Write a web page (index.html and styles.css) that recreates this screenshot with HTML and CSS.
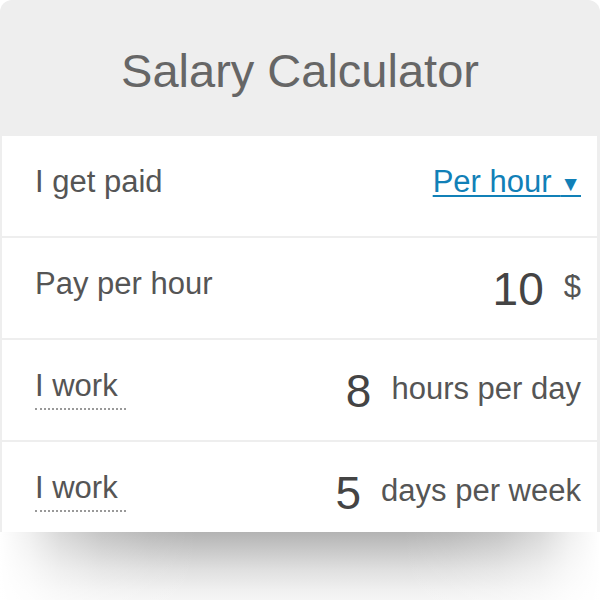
FILE: index.html
```html
<!DOCTYPE html>
<html lang="en">
<head>
    <meta charset="UTF-8">
    <meta name="viewport" content="width=device-width, initial-scale=1.0">
    <title>Salary Calculator</title>
    <link rel="stylesheet" href="styles.css">
</head>
<body>

<div class="widget">
    <div class="calculator">
        <!-- Header -->
        <div class="calculator-header">
            <h1>Salary Calculator</h1>
        </div>

        <!-- Input rows -->
        <div class="calculator-rows">
            <div class="row">
                <span class="label">I get paid</span>
                <span class="select">Per hour&nbsp;<span class="caret">▼</span></span>
            </div>
            <div class="row">
                <span class="label">Pay per hour</span>
                <span class="field">
                    <span class="value">10</span>
                    <span class="unit">$</span>
                </span>
            </div>
            <div class="row">
                <span class="label"><span class="hint">I work</span></span>
                <span class="field">
                    <span class="value">8</span>
                    <span class="unit">hours per day</span>
                </span>
            </div>
            <div class="row">
                <span class="label"><span class="hint">I work</span></span>
                <span class="field">
                    <span class="value">5</span>
                    <span class="unit">days per week</span>
                </span>
            </div>
        </div>
    </div>
    <div class="widget-shadow"></div>
</div>

</body>
</html>
```

FILE: styles.css
```css
body {
    font-family: "Liberation Sans", Arial, sans-serif;
    margin: 0;
    padding: 0;
    background-color: #fff;
}

.calculator {
    height: 532px;
    overflow: hidden;
    background-color: #eee;
    border-radius: 12px 12px 0 0;
}

/* Soft shadow under the card */
.widget-shadow {
    height: 68px;
    background:
        linear-gradient(to right, #fff, rgba(255, 255, 255, 0.8) 5%, rgba(255, 255, 255, 0.5) 10%, rgba(255, 255, 255, 0.23) 17%, rgba(255, 255, 255, 0.08) 25%, rgba(255, 255, 255, 0) 33%, rgba(255, 255, 255, 0) 67%, rgba(255, 255, 255, 0.08) 75%, rgba(255, 255, 255, 0.23) 83%, rgba(255, 255, 255, 0.5) 90%, rgba(255, 255, 255, 0.8) 95%, #fff),
        linear-gradient(#b3b3b3, #c9c9c9 27%, #e0e0e0 56%, #f0f0f0 85%, #f5f5f5);
}

.calculator-header {
    height: 136px;
    box-sizing: border-box;
    padding-top: 4px;
    display: flex;
    align-items: center;
    justify-content: center;
}

.calculator-header h1 {
    margin: 0;
    font-size: 47px;
    font-weight: normal;
    color: #666;
}

.calculator-rows {
    display: flex;
    flex-direction: column;
    gap: 2px;
    padding: 0 3px 0 2px;
}

.row {
    height: 100px;
    box-sizing: border-box;
    flex-shrink: 0;
    display: flex;
    align-items: center;
    justify-content: space-between;
    padding: 0 16px 8px 33px;
    background-color: #fff;
    font-size: 31px;
    color: #555;
}

/* Labels with a dotted underline */
.hint {
    padding: 0 8px 5px 0;
    border-bottom: 2px dotted #999;
}

.select {
    color: #1180b7;
    text-decoration: underline;
    text-decoration-thickness: 2px;
    text-underline-offset: 3px;
}

.caret {
    font-size: 21px;
    vertical-align: 1px;
}

.field {
    display: flex;
    align-items: baseline;
    gap: 20px;
    margin-bottom: 6px;
}

.value {
    font-size: 46px;
    color: #444;
    position: relative;
    top: 8px;
}
```
